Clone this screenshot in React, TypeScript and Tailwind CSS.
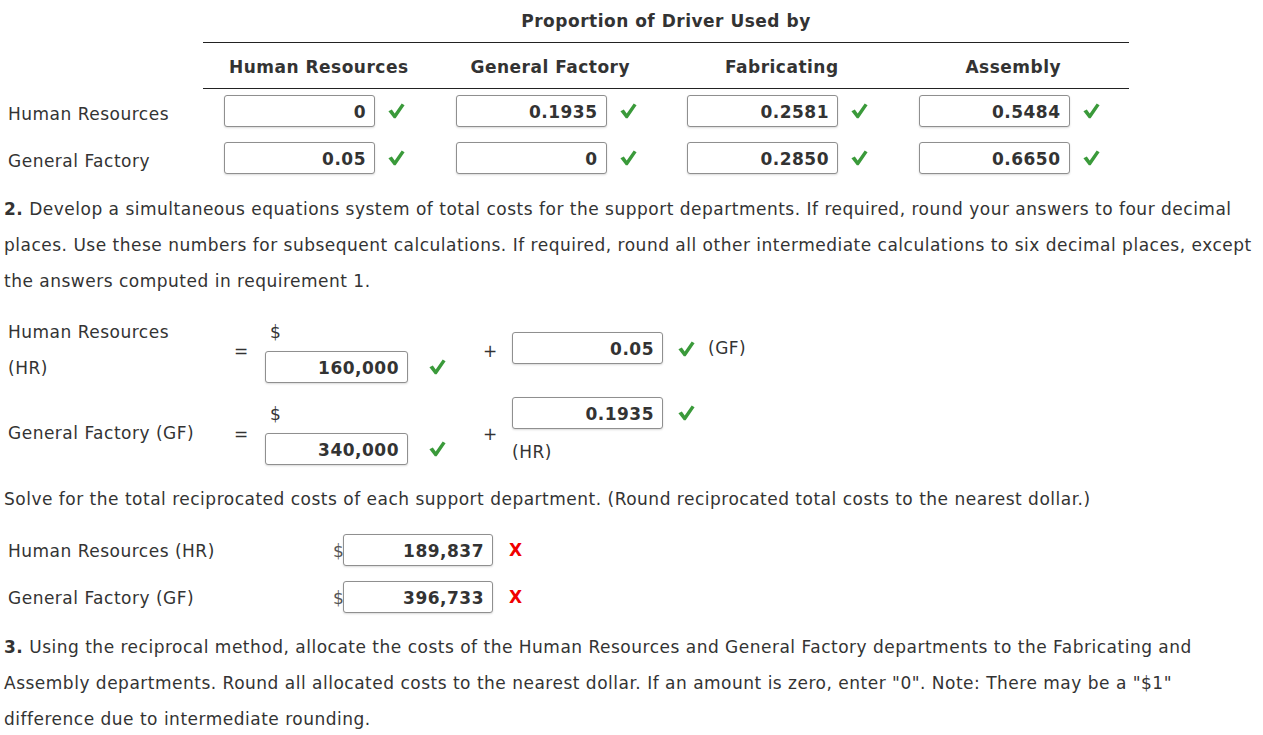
import React from 'react';

const Check = () => (
  <svg width="17" height="16" viewBox="0 0 16 15" className="shrink-0">
    <path d="M0.4 7.8 L3.6 6 L6.3 9.8 L12.9 0.4 L15.6 2.1 L7.2 14.4 L5.5 14.4 Z" fill="#3a9a3a" />
  </svg>
);

const Cross = () => (
  <span className="text-[#f00000] font-bold text-[17px] leading-none">X</span>
);

function Box({ value, w = 'w-[151px]' }: { value: string; w?: string }) {
  return (
    <div className={`${w} h-[32px] shrink-0 rounded-[3px] border border-[#8f8f8f] bg-white shadow-[0_1px_2px_rgba(0,0,0,0.15)] flex items-center justify-end pr-[8px] pt-[4px] font-bold text-[#333]`}>
      {value}
    </div>
  );
}

const headers = ['Human Resources', 'General Factory', 'Fabricating', 'Assembly'];
const rows = [
  { label: 'Human Resources', values: ['0', '0.1935', '0.2581', '0.5484'] },
  { label: 'General Factory', values: ['0.05', '0', '0.2850', '0.6650'] },
];

export default function App() {
  return (
    <div className="w-[1263px] min-h-[735px] bg-white text-[#333] text-[17px] tracking-[0.5px]" style={{ fontFamily: '"DejaVu Sans", Verdana, sans-serif' }}>
      {/* proportion table */}
      <div className="pl-[203px] w-[1129px]">
        <div className="h-[43px] flex items-center justify-center font-bold border-b border-[#222] pt-[1px]">Proportion of Driver Used by</div>
        <div className="h-[46px] grid grid-cols-4 border-b border-[#222] font-bold">
          {headers.map((h) => (
            <div key={h} className="flex items-center justify-center pt-[4px]">{h}</div>
          ))}
        </div>
      </div>
      <div className="mt-[6px] flex flex-col gap-[15px]">
        {rows.map((r) => (
          <div key={r.label} className="flex items-center h-[32px]">
            <div className="w-[224px] pl-[8px] pt-[8px]">{r.label}</div>
            <div className="flex">
              {r.values.map((v, i) => (
                <div key={i} className="w-[231.5px] flex items-center gap-[13px]">
                  <Box value={v} />
                  <Check />
                </div>
              ))}
            </div>
          </div>
        ))}
      </div>

      {/* requirement 2 */}
      <p className="mt-[17px] pl-[4px] leading-[36px]">
        <span className="font-bold">2.</span> Develop a simultaneous equations system of total costs for the support departments. If required, round your answers to four decimal places. Use these numbers for subsequent calculations. If required, round all other intermediate calculations to six decimal places, except the answers computed in requirement 1.
      </p>

      {/* equations */}
      <div className="mt-[14px] pl-[8px]">
        <div className="flex h-[72px]">
          <div className="w-[226px] flex flex-col leading-[36px] pt-[1px]">
            <span>Human Resources</span>
            <span>(HR)</span>
          </div>
          <div className="w-[31px] flex items-center pt-[5px]">=</div>
          <div className="flex flex-col">
            <span className="h-[36px] flex items-center pl-[5px] pt-[3px]">$</span>
            <div className="flex items-center gap-[21px] mt-[2px]">
              <Box value="160,000" w="w-[143px]" />
              <Check />
            </div>
          </div>
          <div className="w-[66px] pl-[37px] flex items-center pt-[5px]">+</div>
          <div className="flex items-start gap-[15px] pt-[19px]">
            <Box value="0.05" />
            <div className="h-[32px] flex items-center gap-[13px] pt-[2px]">
              <Check />
              <span>(GF)</span>
            </div>
          </div>
        </div>

        <div className="flex h-[74px] mt-[10px]">
          <div className="w-[226px] flex items-center pt-[3px]">General Factory (GF)</div>
          <div className="w-[31px] flex items-center pt-[6px]">=</div>
          <div className="flex flex-col">
            <span className="h-[36px] flex items-center pl-[5px] pt-[3px]">$</span>
            <div className="flex items-center gap-[21px] mt-[2px]">
              <Box value="340,000" w="w-[143px]" />
              <Check />
            </div>
          </div>
          <div className="w-[66px] pl-[37px] flex items-center pt-[6px]">+</div>
          <div className="flex flex-col pt-[2px]">
            <div className="flex items-center gap-[15px]">
              <Box value="0.1935" />
              <Check />
            </div>
            <span className="mt-[5px] leading-[36px]">(HR)</span>
          </div>
        </div>
      </div>

      <p className="mt-[12px] pl-[4px] leading-[36px]">
        Solve for the total reciprocated costs of each support department. (Round reciprocated total costs to the nearest dollar.)
      </p>

      <div className="mt-[17px] pl-[8px] flex flex-col gap-[15px]">
        {[
          { label: 'Human Resources (HR)', value: '189,837' },
          { label: 'General Factory (GF)', value: '396,733' },
        ].map((r) => (
          <div key={r.label} className="flex items-center h-[32px]">
            <div className="w-[325px] pt-[4px]">{r.label}</div>
            <span className="w-[10px] text-[#555] tracking-normal pt-[3px]">$</span>
            <div className="flex items-center gap-[16px]">
              <Box value={r.value} w="w-[150px]" />
              <Cross />
            </div>
          </div>
        ))}
      </div>

      <p className="mt-[16px] pl-[4px] pr-[30px] leading-[36px]">
        <span className="font-bold">3.</span> Using the reciprocal method, allocate the costs of the Human Resources and General Factory departments to the Fabricating and Assembly departments. Round all allocated costs to the nearest dollar. If an amount is zero, enter "0". Note: There may be a "$1" difference due to intermediate rounding.
      </p>
    </div>
  );
}
